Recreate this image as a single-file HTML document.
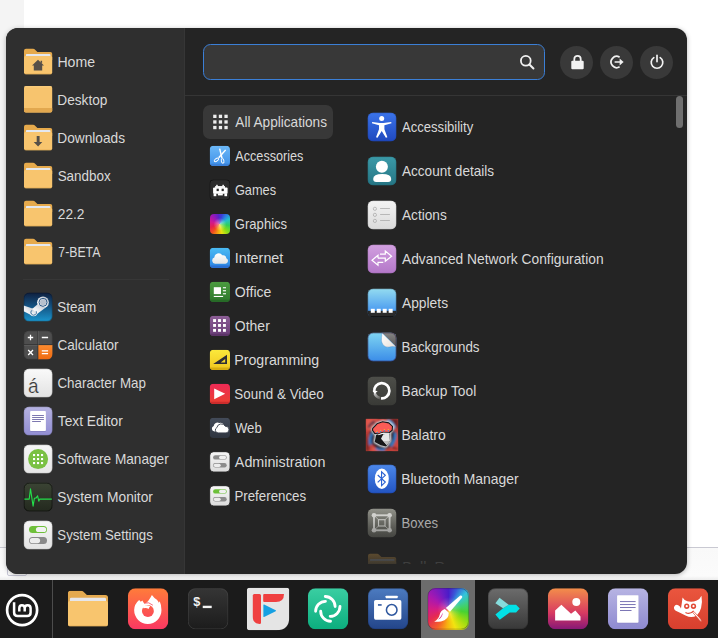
<!DOCTYPE html>
<html lang="en"><head><meta charset="utf-8"><title>Menu</title>
<style>
html,body{margin:0;padding:0}
body{width:718px;height:638px;overflow:hidden;position:relative;background:#fff;font-family:"Liberation Sans",sans-serif;font-size:14.5px}
.abs{position:absolute}
.t{position:absolute;white-space:nowrap;line-height:20px;height:20px;font-size:14.5px;transform-origin:0 50%}
#bgl{left:0;top:0;width:24px;height:548px;background:#f4f4f4}
#bgb{left:0;top:547px;width:718px;height:33px;background:linear-gradient(to bottom,#f9f9f9 0,#fbfbfb 28px,#ececec 32px,#dcdcdc 33px);border-top:1px solid #c9c9d2;box-sizing:border-box}
#box{left:7px;top:541px;width:20px;height:35px;border:1px solid #c9c9d8;border-radius:2px;box-sizing:border-box;background:#fdfdfd}
#menu{left:6px;top:28px;width:681px;height:546px;border-radius:12px;background:#242424;overflow:hidden;box-shadow:0 1px 5px rgba(0,0,0,.28)}
#side{left:0;top:0;width:179px;height:546px;background:#2f2f2f;box-sizing:border-box;border-right:1px solid #363636}
#sep1{left:17px;top:251px;width:146px;height:1px;background:#373737}
#sep2{left:179px;top:67px;width:502px;height:1px;background:#353535}
#search{left:197px;top:16px;width:342px;height:36px;box-sizing:border-box;border:1px solid #3b7fd6;border-radius:7.5px;background:#383838}
.rb{width:33px;height:33px;border-radius:50%;background:#393939;top:17.5px}
#scroll{left:669.5px;top:68px;width:7px;height:32px;border-radius:4px;background:#6f6f6f}
#sel{left:197px;top:77px;width:130px;height:34px;border-radius:7px;background:#383838}
#fade{left:336px;top:504px;width:338px;height:70px;background:linear-gradient(to bottom,rgba(36,36,36,0) 0,rgba(36,36,36,.26) 27%,rgba(36,36,36,.78) 77%,rgba(36,36,36,.93) 90%,rgba(36,36,36,.96) 100%)}
#panel{left:0;top:580px;width:718px;height:58px;background:#1b1b1b}
#pact{left:421px;top:580px;width:54px;height:58px;background:#6c6c6c}
#psep{left:52px;top:580px;width:1px;height:58px;background:#4c4c4c}
#rainbow{left:427.5px;top:588.2px;width:41.4px;height:41.4px;border-radius:7.8px;background:radial-gradient(circle at 52% 50%,rgba(255,240,200,.35) 0,rgba(255,240,200,0) 40%),conic-gradient(from 0deg at 50% 50%,#4a1cc8 0deg,#3a58d8 22deg,#34c4dc 48deg,#3fd07a 75deg,#48d232 100deg,#9adc12 128deg,#f2e410 160deg,#f8b010 185deg,#f4602a 212deg,#e62a52 240deg,#d41c86 270deg,#a818b0 305deg,#6a1cc4 340deg,#4a1cc8 360deg)}
#layer{left:0;top:0;width:718px;height:638px}
</style></head><body>
<div class="abs" id="bgl"></div>
<div class="abs" id="bgb"></div>
<div class="abs" id="box"></div>
<div class="abs" id="menu">
  <div class="abs" id="side"></div>
  <div class="abs" id="sep1"></div>
  <div class="abs" id="sep2"></div>
  <div class="abs" id="search"></div>
  <svg class="abs" style="left:513px;top:25.5px" width="17" height="17" viewBox="0 0 16 16"><circle cx="6.4" cy="6.4" r="4.6" fill="none" stroke="#f0f0f0" stroke-width="1.7"/><path d="M9.8 9.8 L13.6 13.6" stroke="#f0f0f0" stroke-width="1.9" stroke-linecap="round"/></svg>
  <div class="abs rb" style="left:554px"></div>
  <div class="abs rb" style="left:594px"></div>
  <div class="abs rb" style="left:634px"></div>
  <svg class="abs" style="left:562.5px;top:25.5px" width="17" height="17" viewBox="0 0 17 17"><path d="M5.3 7.4 V5 A3.2 3.2 0 0 1 11.7 5 V7.4" fill="none" stroke="#f2f2f2" stroke-width="1.8"/><rect x="2.3" y="6.7" width="12.4" height="8.6" rx="1.1" fill="#f2f2f2"/></svg>
  <svg class="abs" style="left:603px;top:26px" width="16" height="16" viewBox="0 0 16 16"><path d="M10.6 3.2 A5.6 5.6 0 1 0 10.6 12.8" fill="none" stroke="#f2f2f2" stroke-width="1.7"/><path d="M5.6 8 H12" stroke="#f2f2f2" stroke-width="1.7"/><path d="M10.6 4.6 L14.6 8 L10.6 11.4 Z" fill="#f2f2f2"/></svg>
  <svg class="abs" style="left:643px;top:26px" width="16" height="16" viewBox="0 0 16 16"><path d="M4.8 3.6 A5.8 5.8 0 1 0 11.2 3.6" fill="none" stroke="#f2f2f2" stroke-width="1.7" stroke-linecap="round"/><path d="M8 1.4 V7.6" stroke="#f2f2f2" stroke-width="1.7" stroke-linecap="round"/></svg>
  <div class="abs" id="scroll"></div>
  <div class="abs" id="sel"></div>
</div>
<svg class="abs" style="left:0;top:0" width="718" height="638" viewBox="0 0 718 638">
<defs><clipPath id="cpapps"><rect x="336" y="97" width="340" height="467"/></clipPath></defs>
<svg x="24" y="48" opacity="1.0" width="29" height="29" viewBox="0 0 29 29"><path d="M0 2.8 Q0 0.8 2 0.8 H9.3 Q10 0.8 10.6 1.3 L13.4 3.9 H26.3 Q28.2 3.9 28.2 5.8 V12 H0 Z" fill="#e6aa4c"/><rect x="1.9" y="5.9" width="24.6" height="4" rx="1" fill="#e4e8ef"/><path d="M0 9.6 Q0 8 1.6 8 H26.6 Q28.2 8 28.2 9.6 V24.5 Q28.2 26.3 26.4 26.3 H1.8 Q0 26.3 0 24.5 Z" fill="#f8c56e"/><rect x="0.6" y="25.5" width="27" height="0.8" rx="0.4" fill="#e3a94f" opacity="0.7"/><path d="M14 11.8 L20 17.6 H18.2 V22.4 H9.8 V17.6 H8 Z M16.6 12.8 h1.5 v2.6 l-1.5 -1.4 Z" fill="#554f48"/></svg>
<svg x="24" y="84" opacity="1.0" width="29" height="30" viewBox="0 0 29 30"><rect x="0" y="2.1" width="28.2" height="26.5" rx="1.8" fill="#f7c46e"/><path d="M0 23.9 H28.2 V26.8 Q28.2 28.6 26.4 28.6 H1.8 Q0 28.6 0 26.8 Z" fill="#e2a84f"/><rect x="0.3" y="2.4" width="27.6" height="0.9" rx="0.5" fill="#fbd68c" opacity="0.8"/></svg>
<svg x="24" y="124" opacity="1.0" width="29" height="29" viewBox="0 0 29 29"><path d="M0 2.8 Q0 0.8 2 0.8 H9.3 Q10 0.8 10.6 1.3 L13.4 3.9 H26.3 Q28.2 3.9 28.2 5.8 V12 H0 Z" fill="#e6aa4c"/><rect x="1.9" y="5.9" width="24.6" height="4" rx="1" fill="#e4e8ef"/><path d="M0 9.6 Q0 8 1.6 8 H26.6 Q28.2 8 28.2 9.6 V24.5 Q28.2 26.3 26.4 26.3 H1.8 Q0 26.3 0 24.5 Z" fill="#f8c56e"/><rect x="0.6" y="25.5" width="27" height="0.8" rx="0.4" fill="#e3a94f" opacity="0.7"/><path d="M12.7 12 h2.9 v6 h2.7 L14.1 22.5 L9.7 18 h3 Z" fill="#554f48"/></svg>
<svg x="24" y="162" opacity="1.0" width="29" height="29" viewBox="0 0 29 29"><path d="M0 2.8 Q0 0.8 2 0.8 H9.3 Q10 0.8 10.6 1.3 L13.4 3.9 H26.3 Q28.2 3.9 28.2 5.8 V12 H0 Z" fill="#e6aa4c"/><rect x="1.9" y="5.9" width="24.6" height="4" rx="1" fill="#e4e8ef"/><path d="M0 9.6 Q0 8 1.6 8 H26.6 Q28.2 8 28.2 9.6 V24.5 Q28.2 26.3 26.4 26.3 H1.8 Q0 26.3 0 24.5 Z" fill="#f8c56e"/><rect x="0.6" y="25.5" width="27" height="0.8" rx="0.4" fill="#e3a94f" opacity="0.7"/></svg>
<svg x="24" y="200" opacity="1.0" width="29" height="29" viewBox="0 0 29 29"><path d="M0 2.8 Q0 0.8 2 0.8 H9.3 Q10 0.8 10.6 1.3 L13.4 3.9 H26.3 Q28.2 3.9 28.2 5.8 V12 H0 Z" fill="#e6aa4c"/><rect x="1.9" y="5.9" width="24.6" height="4" rx="1" fill="#e4e8ef"/><path d="M0 9.6 Q0 8 1.6 8 H26.6 Q28.2 8 28.2 9.6 V24.5 Q28.2 26.3 26.4 26.3 H1.8 Q0 26.3 0 24.5 Z" fill="#f8c56e"/><rect x="0.6" y="25.5" width="27" height="0.8" rx="0.4" fill="#e3a94f" opacity="0.7"/></svg>
<svg x="24" y="238" opacity="1.0" width="29" height="29" viewBox="0 0 29 29"><path d="M0 2.8 Q0 0.8 2 0.8 H9.3 Q10 0.8 10.6 1.3 L13.4 3.9 H26.3 Q28.2 3.9 28.2 5.8 V12 H0 Z" fill="#e6aa4c"/><rect x="1.9" y="5.9" width="24.6" height="4" rx="1" fill="#e4e8ef"/><path d="M0 9.6 Q0 8 1.6 8 H26.6 Q28.2 8 28.2 9.6 V24.5 Q28.2 26.3 26.4 26.3 H1.8 Q0 26.3 0 24.5 Z" fill="#f8c56e"/><rect x="0.6" y="25.5" width="27" height="0.8" rx="0.4" fill="#e3a94f" opacity="0.7"/></svg>
<svg x="23.6" y="292.6" width="29" height="29" viewBox="0 0 29 29"><defs><linearGradient id="gst" x1="0" y1="0" x2="0" y2="1"><stop offset="0" stop-color="#0f1f3e"/><stop offset="0.45" stop-color="#14507f"/><stop offset="1" stop-color="#1b96ce"/></linearGradient><linearGradient id="gst2" x1="1" y1="0" x2="0" y2="1"><stop offset="0" stop-color="#b4bcc8"/><stop offset="0.6" stop-color="#eef0f3"/><stop offset="1" stop-color="#ffffff"/></linearGradient><clipPath id="cst"><rect x="0" y="0" width="29" height="29" rx="5.8"/></clipPath></defs><rect x="0" y="0" width="29" height="29" rx="5.8" fill="url(#gst)"/><rect x="0.4" y="0.4" width="28.2" height="28.2" rx="5.3999999999999995" fill="none" stroke="#000" stroke-width="0.8" opacity="0.3"/><g fill="url(#gst2)" clip-path="url(#cst)"><circle cx="19.4" cy="9.7" r="5.9"/><circle cx="10" cy="19.8" r="3.8"/><path d="M0 13.0 L10.4 16.4 L7.4 22.4 L0 18.7 Z"/><path d="M14 11.6 L8.6 16.4 L13.4 21.4 L22.2 15 Z"/></g><circle cx="19.4" cy="9.7" r="4" fill="none" stroke="#1a4a7a" stroke-width="0.9"/><circle cx="19.4" cy="9.7" r="3" fill="#b7c0cd"/><path d="M12.6 18.6 A2.8 2.8 0 1 1 8.2 17.7" fill="none" stroke="#1b5b8f" stroke-width="0.8"/></svg>
<svg x="23.6" y="330.6" width="29" height="29" viewBox="0 0 29 29"><defs><linearGradient id="gca" x1="0" y1="0" x2="0" y2="1"><stop offset="0" stop-color="#fb8b30"/><stop offset="1" stop-color="#ee680e"/></linearGradient><clipPath id="cca"><rect x="0" y="0" width="29" height="29" rx="5.8"/></clipPath></defs><rect x="0" y="0" width="29" height="29" rx="5.8" fill="#4e4e4e"/><rect x="0.4" y="0.4" width="28.2" height="28.2" rx="5.3999999999999995" fill="none" stroke="#262626" stroke-width="0.8" opacity="0.3"/><g clip-path="url(#cca)"><rect x="14.4" y="14.4" width="15" height="15" fill="url(#gca)"/><rect x="0" y="13.7" width="29" height="0.8" fill="#303030"/><rect x="13.9" y="0" width="0.8" height="29" fill="#303030"/><rect x="14.7" y="0" width="0.5" height="14" fill="#6a6a6a"/><rect x="0" y="14.5" width="14" height="0.5" fill="#6a6a6a"/></g><g stroke="#fff" stroke-width="1.3" stroke-linecap="butt"><path d="M4.2 6.9 H9.6 M6.9 4.2 V9.6"/><path d="M18.2 6.9 H24.5"/><path d="M4.6 19.4 L9.4 24.4 M9.4 19.4 L4.6 24.4"/><path d="M18.2 20.2 H24.5 M18.2 23 H24.5"/></g></svg>
<svg x="23.6" y="368.6" width="29" height="29" viewBox="0 0 29 29"><defs><linearGradient id="gcm" x1="0" y1="0" x2="0" y2="1"><stop offset="0" stop-color="#fafafa"/><stop offset="1" stop-color="#e2e2e2"/></linearGradient></defs><rect x="0" y="0" width="29" height="29" rx="5.8" fill="url(#gcm)"/><rect x="0.3" y="0.3" width="28.4" height="28.4" rx="5.5" fill="none" stroke="#2a2a2a" stroke-width="0.6" opacity="0.3"/><text x="4.3" y="24.2" font-family="Liberation Sans, sans-serif" font-size="21" fill="#3b3b3b" stroke="#ececec" stroke-width="0.2" textLength="10.6" lengthAdjust="spacingAndGlyphs">á</text></svg>
<svg x="23.6" y="406.6" width="29" height="29" viewBox="0 0 29 29"><defs><linearGradient id="gte" x1="0" y1="0" x2="0" y2="1"><stop offset="0" stop-color="#b6b3e2"/><stop offset="1" stop-color="#918dd2"/></linearGradient></defs><rect x="0" y="0" width="29" height="29" rx="5.8" fill="url(#gte)"/><rect x="0.3" y="0.3" width="28.4" height="28.4" rx="5.5" fill="none" stroke="#2c2b3a" stroke-width="0.6" opacity="0.3"/><rect x="6.5" y="5" width="15.8" height="20.2" rx="0.8" fill="#6f69a8" opacity="0.5"/><rect x="6.5" y="4.5" width="15.8" height="20" rx="0.8" fill="#fff"/><g fill="#6f69a8"><rect x="8.5" y="8.4" width="11.8" height="0.9"/><rect x="8.5" y="10.5" width="11.8" height="0.9"/><rect x="8.5" y="12.5" width="11.8" height="0.9"/><rect x="8.5" y="14.5" width="8.8" height="0.9"/></g></svg>
<svg x="23.6" y="444.6" width="29" height="29" viewBox="0 0 29 29"><defs><linearGradient id="gsm" x1="0" y1="0" x2="0" y2="1"><stop offset="0" stop-color="#f6f6f6"/><stop offset="1" stop-color="#e6e6e6"/></linearGradient></defs><rect x="0" y="0" width="29" height="29" rx="5.8" fill="url(#gsm)"/><rect x="0.3" y="0.3" width="28.4" height="28.4" rx="5.5" fill="none" stroke="#2a2a2a" stroke-width="0.6" opacity="0.3"/><circle cx="14.5" cy="14.5" r="10" fill="#7ac143"/><rect x="9.4" y="9.4" width="2.1" height="2.1" fill="#fff"/><rect x="9.4" y="13.4" width="2.1" height="2.1" fill="#fff"/><rect x="9.4" y="17.4" width="2.1" height="2.1" fill="#fff"/><rect x="13.4" y="9.4" width="2.1" height="2.1" fill="#fff"/><rect x="13.4" y="13.4" width="2.1" height="2.1" fill="#fff"/><rect x="13.4" y="17.4" width="2.1" height="2.1" fill="#fff"/><rect x="17.4" y="9.4" width="2.1" height="2.1" fill="#fff"/><rect x="17.4" y="13.4" width="2.1" height="2.1" fill="#fff"/><rect x="17.4" y="17.4" width="2.1" height="2.1" fill="#fff"/></svg>
<svg x="23.6" y="482.6" width="29" height="29" viewBox="0 0 29 29"><defs><linearGradient id="gmo" x1="0" y1="0" x2="0" y2="1"><stop offset="0" stop-color="#3b4434"/><stop offset="1" stop-color="#23291e"/></linearGradient></defs><rect x="0" y="0" width="29" height="29" rx="5.8" fill="url(#gmo)"/><rect x="0.45" y="0.45" width="28.1" height="28.1" rx="5.4" fill="none" stroke="#0a0a0a" stroke-width="0.9" opacity="0.85"/><path d="M0.8 16.5 H5.6 L6.9 6.2 L9.5 23.5 L10.8 15.6 L12.6 15.3 L14 13.2 L15.2 18.6 L16 16.5 H28.2" fill="none" stroke="#23e04a" stroke-width="1.1" stroke-linejoin="round"/></svg>
<svg x="23.6" y="520.6" width="29" height="29" viewBox="0 0 29 29"><defs><linearGradient id="gss" x1="0" y1="0" x2="0" y2="1"><stop offset="0" stop-color="#f7f7f7"/><stop offset="1" stop-color="#e3e3e3"/></linearGradient></defs><rect x="0" y="0" width="29" height="29" rx="5.8" fill="url(#gss)"/><rect x="0.3" y="0.3" width="28.4" height="28.4" rx="5.5" fill="none" stroke="#2a2a2a" stroke-width="0.6" opacity="0.3"/><rect x="5.4" y="5.4" width="18" height="7" rx="3.5" fill="#6fc03a"/><rect x="12.3" y="6.3" width="10.3" height="5.2" rx="2.6" fill="#f2f2f2"/><rect x="5.4" y="16.5" width="18" height="7" rx="3.5" fill="#8a8a8a"/><rect x="6.2" y="17.4" width="10.3" height="5.2" rx="2.6" fill="#ececec"/></svg>
<g><rect x="213.2" y="114.7" width="3.3" height="3.3" fill="#ededed"/><rect x="213.2" y="120.3" width="3.3" height="3.3" fill="#ededed"/><rect x="213.2" y="125.9" width="3.3" height="3.3" fill="#ededed"/><rect x="218.8" y="114.7" width="3.3" height="3.3" fill="#ededed"/><rect x="218.8" y="120.3" width="3.3" height="3.3" fill="#ededed"/><rect x="218.8" y="125.9" width="3.3" height="3.3" fill="#ededed"/><rect x="224.4" y="114.7" width="3.3" height="3.3" fill="#ededed"/><rect x="224.4" y="120.3" width="3.3" height="3.3" fill="#ededed"/><rect x="224.4" y="125.9" width="3.3" height="3.3" fill="#ededed"/></g>
<svg x="209.7" y="145.7" width="20.3" height="20.3" viewBox="0 0 20.3 20.3"><defs><linearGradient id="gac" x1="0" y1="0" x2="0" y2="1"><stop offset="0" stop-color="#6cb9f8"/><stop offset="1" stop-color="#3e8fe8"/></linearGradient></defs><rect x="0" y="0" width="20.3" height="20.3" rx="4" fill="url(#gac)"/><path d="M0 18.1 H20.3 V16.3 Q20.3 20.3 16.3 20.3 H4 Q0 20.3 0 16.3 Z" fill="#3a80d8" opacity="1"/><path d="M9.3 3 L10.6 2.9 L13 12.2 L11.6 12.8 Z" fill="#fff"/><path d="M15.4 3.8 L16.5 4.6 L9.6 12.6 L8.4 11.6 Z" fill="#fff"/><g fill="none" stroke="#fff" stroke-width="0.95"><ellipse cx="12.9" cy="15.2" rx="1.3" ry="2.3" transform="rotate(-12 12.9 15.2)"/><ellipse cx="6.7" cy="14.2" rx="1.3" ry="2.5" transform="rotate(55 6.7 14.2)"/></g></svg>
<svg x="209.7" y="179.7" width="20.3" height="20.3" viewBox="0 0 20.3 20.3"><rect x="0" y="0" width="20.3" height="20.3" rx="4" fill="#2b2b2b" stroke="#111" stroke-width="0.9"/><g fill="#fff"><rect x="6.5" y="5.1" width="1.5" height="1.6"/><rect x="12.7" y="5.1" width="1.5" height="1.6"/><rect x="5.4" y="6.4" width="9.9" height="1.8"/><rect x="3.4" y="7.8" width="14.5" height="6.3" rx="1"/><rect x="3.9" y="13.6" width="2.7" height="2.9"/><rect x="8.2" y="13.6" width="4.9" height="2.1"/><rect x="14.7" y="13.6" width="2.7" height="2.9"/></g><rect x="6.9" y="9" width="2.2" height="2.4" fill="#2b2b2b"/><rect x="11.9" y="9" width="2.2" height="2.4" fill="#2b2b2b"/></svg>
<svg x="209.7" y="247.7" width="20.3" height="20.3" viewBox="0 0 20.3 20.3"><defs><linearGradient id="gin" x1="0" y1="0" x2="0" y2="1"><stop offset="0" stop-color="#4bbcf4"/><stop offset="1" stop-color="#2c82e2"/></linearGradient><linearGradient id="gin2" x1="0" y1="0" x2="0" y2="1"><stop offset="0" stop-color="#ffffff"/><stop offset="1" stop-color="#e4e4e4"/></linearGradient></defs><rect x="0" y="0" width="20.3" height="20.3" rx="4" fill="url(#gin)"/><path d="M0 17.900000000000002 H20.3 V16.3 Q20.3 20.3 16.3 20.3 H4 Q0 20.3 0 16.3 Z" fill="#2a6fd2" opacity="1"/><path d="M5.4 16.1 A3.2 3.2 0 0 1 4.6 9.9 A4.4 4.4 0 0 1 12.6 7.5 A3.5 3.5 0 0 1 16.6 10.6 A2.9 2.9 0 0 1 15.8 16.1 Z" fill="url(#gin2)"/></svg>
<svg x="209.7" y="281.7" width="20.3" height="20.3" viewBox="0 0 20.3 20.3"><defs><linearGradient id="gof" x1="0" y1="0" x2="0" y2="1"><stop offset="0" stop-color="#4c9c40"/><stop offset="1" stop-color="#2c772b"/></linearGradient></defs><rect x="0" y="0" width="20.3" height="20.3" rx="4" fill="url(#gof)"/><path d="M0 18.1 H20.3 V16.3 Q20.3 20.3 16.3 20.3 H4 Q0 20.3 0 16.3 Z" fill="#276a27" opacity="1"/><g fill="#fff"><rect x="4.1" y="5.5" width="7.2" height="6.9"/><rect x="13.2" y="5.5" width="3.1" height="1.1"/><rect x="13.2" y="8.5" width="3.1" height="1.1"/><rect x="13.2" y="11.5" width="3.1" height="1.1"/><rect x="4.1" y="14.2" width="9.3" height="1.1"/></g></svg>
<svg x="209.7" y="315.7" width="20.3" height="20.3" viewBox="0 0 20.3 20.3"><defs><linearGradient id="got" x1="0" y1="0" x2="0" y2="1"><stop offset="0" stop-color="#8c5e96"/><stop offset="1" stop-color="#693d77"/></linearGradient></defs><rect x="0" y="0" width="20.3" height="20.3" rx="4" fill="url(#got)"/><path d="M0 18.1 H20.3 V16.3 Q20.3 20.3 16.3 20.3 H4 Q0 20.3 0 16.3 Z" fill="#5c3468" opacity="1"/><rect x="3.40" y="3.40" width="2.9" height="2.9" fill="#fff"/><rect x="3.40" y="8.30" width="2.9" height="2.9" fill="#fff"/><rect x="3.40" y="13.20" width="2.9" height="2.9" fill="#fff"/><rect x="8.35" y="3.40" width="2.9" height="2.9" fill="#fff"/><rect x="8.35" y="8.30" width="2.9" height="2.9" fill="#fff"/><rect x="8.35" y="13.20" width="2.9" height="2.9" fill="#fff"/><rect x="13.30" y="3.40" width="2.9" height="2.9" fill="#fff"/><rect x="13.30" y="8.30" width="2.9" height="2.9" fill="#fff"/><rect x="13.30" y="13.20" width="2.9" height="2.9" fill="#fff"/></svg>
<svg x="209.7" y="349.7" width="20.3" height="20.3" viewBox="0 0 20.3 20.3"><defs><linearGradient id="gpr" x1="0" y1="0" x2="0" y2="1"><stop offset="0" stop-color="#fbe93c"/><stop offset="1" stop-color="#f0c61e"/></linearGradient></defs><rect x="0" y="0" width="20.3" height="20.3" rx="4" fill="url(#gpr)"/><path d="M0 17.900000000000002 H20.3 V16.3 Q20.3 20.3 16.3 20.3 H4 Q0 20.3 0 16.3 Z" fill="#d6ac10" opacity="1"/><path d="M17.3 5 V14.3 H3.5 Z M15.5 9.4 L11 12.9 H15.5 Z" fill="#2e2e36" fill-rule="evenodd"/></svg>
<svg x="209.7" y="383.7" width="20.3" height="20.3" viewBox="0 0 20.3 20.3"><defs><linearGradient id="gsv" x1="0" y1="0" x2="0" y2="1"><stop offset="0" stop-color="#ee2a56"/><stop offset="1" stop-color="#ea4030"/></linearGradient></defs><rect x="0" y="0" width="20.3" height="20.3" rx="4" fill="url(#gsv)"/><path d="M0 18.1 H20.3 V16.3 Q20.3 20.3 16.3 20.3 H4 Q0 20.3 0 16.3 Z" fill="#cc2c2c" opacity="1"/><path d="M4.5 4.8 L15.5 10.1 L4.5 15.5 Z" fill="#fff"/></svg>
<svg x="209.7" y="417.7" width="20.3" height="20.3" viewBox="0 0 20.3 20.3"><defs><linearGradient id="gwe" x1="0" y1="0" x2="0" y2="1"><stop offset="0" stop-color="#434b59"/><stop offset="1" stop-color="#2f3540"/></linearGradient></defs><rect x="0" y="0" width="20.3" height="20.3" rx="4" fill="url(#gwe)"/><path d="M4.8 13.8 A2.9 2.9 0 0 1 4 8.2 A3.7 3.7 0 0 1 9.6 5.4 A3.8 3.8 0 0 1 14.6 8 L8 13.8 Z" fill="#fff"/><path d="M8.4 15.2 A2.8 2.8 0 0 1 7.2 9.9 A4.5 4.5 0 0 1 15.6 8.6 A3.3 3.3 0 0 1 16.4 15.2 Z" fill="#fff" stroke="#39404c" stroke-width="0.9"/></svg>
<svg x="209.7" y="451.7" width="20.3" height="20.3" viewBox="0 0 20.3 20.3"><defs><linearGradient id="gtg0" x1="0" y1="0" x2="0" y2="1"><stop offset="0" stop-color="#f7f7f7"/><stop offset="1" stop-color="#dcdcdc"/></linearGradient></defs><rect x="0" y="0" width="20.3" height="20.3" rx="4" fill="url(#gtg0)" stroke="#161616" stroke-width="0.8"/><rect x="3.4" y="3.5" width="13.6" height="4.4" rx="2.2" fill="#8c8c8c"/><rect x="9.4" y="4.1" width="7" height="3.2" rx="1.6" fill="#f0f0f0"/><rect x="3.4" y="11.4" width="13.6" height="4.4" rx="2.2" fill="#8c8c8c"/><rect x="4" y="12" width="7" height="3.2" rx="1.6" fill="#ececec"/></svg>
<svg x="209.7" y="485.7" width="20.3" height="20.3" viewBox="0 0 20.3 20.3"><defs><linearGradient id="gtg1" x1="0" y1="0" x2="0" y2="1"><stop offset="0" stop-color="#f7f7f7"/><stop offset="1" stop-color="#dcdcdc"/></linearGradient></defs><rect x="0" y="0" width="20.3" height="20.3" rx="4" fill="url(#gtg1)" stroke="#161616" stroke-width="0.8"/><rect x="3.4" y="3.5" width="13.6" height="4.4" rx="2.2" fill="#6cc03a"/><rect x="9.4" y="4.1" width="7" height="3.2" rx="1.6" fill="#f0f0f0"/><rect x="3.4" y="11.4" width="13.6" height="4.4" rx="2.2" fill="#8c8c8c"/><rect x="4" y="12" width="7" height="3.2" rx="1.6" fill="#ececec"/></svg>
<g clip-path="url(#cpapps)">
<svg x="367.5" y="112.5" width="29" height="29" viewBox="0 0 29 29"><defs><linearGradient id="ga1" x1="0" y1="0" x2="0" y2="1"><stop offset="0" stop-color="#3b74ea"/><stop offset="1" stop-color="#1f48be"/></linearGradient></defs><rect x="0" y="0" width="29" height="29" rx="5.8" fill="url(#ga1)"/><rect x="0.35" y="0.35" width="28.3" height="28.3" rx="5.45" fill="none" stroke="#16307a" stroke-width="0.7" opacity="0.3"/><g fill="#fff"><circle cx="14.2" cy="6.1" r="2.5"/><path d="M4.7 9.4 L12.3 10.5 H16.1 L23.7 9.4 L24 10.8 L16.9 12.7 V16.8 L19.9 24.7 L18.4 25.3 L14.2 18.4 L10 25.3 L8.5 24.7 L11.5 16.8 V12.7 L4.4 10.8 Z"/></g></svg>
<svg x="367.5" y="156.5" width="29" height="29" viewBox="0 0 29 29"><defs><linearGradient id="ga2" x1="0" y1="0" x2="0" y2="1"><stop offset="0" stop-color="#3b9aa8"/><stop offset="1" stop-color="#257584"/></linearGradient></defs><rect x="0" y="0" width="29" height="29" rx="5.8" fill="url(#ga2)"/><rect x="0.35" y="0.35" width="28.3" height="28.3" rx="5.45" fill="none" stroke="#174650" stroke-width="0.7" opacity="0.3"/><g fill="#fff"><circle cx="14.4" cy="10.2" r="6"/><path d="M5.7 22.6 Q5.7 17.6 14.7 17.6 Q23.7 17.6 23.7 22.6 Q23.7 25.5 20.7 25.5 H8.7 Q5.7 25.5 5.7 22.6 Z"/></g></svg>
<svg x="367.5" y="200.5" width="29" height="29" viewBox="0 0 29 29"><defs><linearGradient id="ga3" x1="0" y1="0" x2="0" y2="1"><stop offset="0" stop-color="#f4f4f4"/><stop offset="1" stop-color="#dadada"/></linearGradient></defs><rect x="0" y="0" width="29" height="29" rx="5.8" fill="url(#ga3)"/><rect x="0.25" y="0.25" width="28.5" height="28.5" rx="5.55" fill="none" stroke="#3a3a3a" stroke-width="0.5" opacity="0.3"/><circle cx="7.4" cy="8.30" r="1.6" fill="none" stroke="#9c9c9c" stroke-width="0.6"/><rect x="12.6" y="7.70" width="9.8" height="0.7" fill="#a4a4a4"/><circle cx="7.4" cy="14.35" r="1.6" fill="none" stroke="#9c9c9c" stroke-width="0.6"/><rect x="12.6" y="13.70" width="9.8" height="0.7" fill="#a4a4a4"/><circle cx="7.4" cy="20.40" r="1.6" fill="none" stroke="#9c9c9c" stroke-width="0.6"/><rect x="12.6" y="19.70" width="9.8" height="0.7" fill="#a4a4a4"/></svg>
<svg x="367.5" y="244.5" width="29" height="29" viewBox="0 0 29 29"><defs><linearGradient id="ga4" x1="0" y1="0" x2="0" y2="1"><stop offset="0" stop-color="#d2a0e0"/><stop offset="1" stop-color="#b377c8"/></linearGradient></defs><rect x="0" y="0" width="29" height="29" rx="5.8" fill="url(#ga4)"/><rect x="0.3" y="0.3" width="28.4" height="28.4" rx="5.5" fill="none" stroke="#5a3468" stroke-width="0.6" opacity="0.3"/><g fill="none" stroke="#fff" stroke-width="1.2" stroke-linejoin="miter"><path d="M12.5 9.7 H17.8 V6.6 L24.1 11.7 L17.8 16.8 V13.7 H10.5"/><path d="M15.8 17.8 H10.5 V20.8 L4.5 15.7 L10.5 10.7 V13.7"/></g></svg>
<svg x="367.5" y="288.5" width="29" height="29" viewBox="0 0 29 29"><defs><linearGradient id="ga5" x1="0" y1="0" x2="0" y2="1"><stop offset="0" stop-color="#94dcf0"/><stop offset="0.76" stop-color="#4c9cf0"/><stop offset="1" stop-color="#4c9cf0"/></linearGradient><clipPath id="ca5"><rect x="0" y="0" width="29" height="29" rx="5.8"/></clipPath></defs><g clip-path="url(#ca5)"><rect x="0" y="0" width="29" height="29" fill="url(#ga5)"/><rect x="0" y="22.3" width="29" height="8" fill="#2b2b2b"/><rect x="0" y="27.6" width="29" height="2" fill="#161616"/><rect x="3.30" y="20.3" width="4" height="4" fill="#fff"/><rect x="9.25" y="20.3" width="4" height="4" fill="#fff"/><rect x="15.20" y="20.3" width="4" height="4" fill="#fff"/><rect x="21.15" y="20.3" width="4" height="4" fill="#fff"/></g><rect x="0.3" y="0.3" width="28.4" height="28.4" rx="5.5" fill="none" stroke="#15151c" stroke-width="0.6" opacity="0.5"/></svg>
<svg x="367.5" y="332.5" width="29" height="29" viewBox="0 0 29 29"><defs><linearGradient id="ga6" x1="0" y1="0" x2="0" y2="1"><stop offset="0" stop-color="#80d6f2"/><stop offset="1" stop-color="#3a8ce8"/></linearGradient><linearGradient id="ga6b" x1="0" y1="0" x2="1" y2="1"><stop offset="0" stop-color="#ffffff"/><stop offset="1" stop-color="#e6e0d8"/></linearGradient><linearGradient id="ga6c" x1="0" y1="0" x2="0" y2="1"><stop offset="0" stop-color="#868686"/><stop offset="1" stop-color="#565656"/></linearGradient><clipPath id="ca6"><rect x="0" y="0" width="29" height="29" rx="5.8"/></clipPath></defs><g clip-path="url(#ca6)"><rect x="0" y="0" width="29" height="29" fill="url(#ga6)"/><path d="M14.3 0 H29 V14.6 Z" fill="url(#ga6c)"/><path d="M14.3 0.2 L28.8 14.4 Q24.5 13.4 21.5 14.6 Q17.3 15.2 15 11.6 Q13.4 8.6 14 5 Q14.5 2.5 14.3 0.2 Z" fill="url(#ga6b)" stroke="#3a78c0" stroke-width="0.3"/></g><rect x="0.35" y="0.35" width="28.3" height="28.3" rx="5.5" fill="none" stroke="#2a0a38" stroke-width="0.7" opacity="0.8"/></svg>
<svg x="367.5" y="376.5" width="29" height="29" viewBox="0 0 29 29"><defs><linearGradient id="ga7" x1="0" y1="0" x2="0" y2="1"><stop offset="0" stop-color="#4d4e49"/><stop offset="1" stop-color="#393a36"/></linearGradient><linearGradient id="ga7b" x1="0" y1="0" x2="1" y2="1"><stop offset="0" stop-color="#c8c8c8"/><stop offset="1" stop-color="#5c5c58"/></linearGradient></defs><rect x="0" y="0" width="29" height="29" rx="5.8" fill="url(#ga7)"/><path d="M7.16 16.80 A7.6 7.6 0 0 0 12.98 21.68" fill="none" stroke="url(#ga7b)" stroke-width="2.6"/><path d="M13.51 21.76 A7.6 7.6 0 1 0 6.77 15.26" fill="none" stroke="#fff" stroke-width="2.7"/><path d="M5.0 14.2 L10.2 14.6 L7.2 17.6 Z" fill="#fff"/></svg>
<svg x="365.7" y="418.7" width="32.6" height="32.6" viewBox="0 0 32.6 32.6"><defs><filter id="fa8" x="-20%" y="-20%" width="140%" height="140%"><feGaussianBlur stdDeviation="1.3"/></filter><filter id="fa8b" x="-20%" y="-20%" width="140%" height="140%"><feGaussianBlur stdDeviation="0.8"/></filter><clipPath id="ca8"><rect x="0" y="0" width="32.6" height="32.6"/></clipPath></defs><g clip-path="url(#ca8)"><rect x="0" y="0" width="32.6" height="32.6" fill="#c0403a"/><g filter="url(#fa8)"><path d="M0 0 H13 Q7 4 6 11 Q2 13 0 9 Z" fill="#e2584e"/><path d="M19 0 H32.6 V11 Q28 4 19 0 Z" fill="#6a2020"/><path d="M0 13 Q4 22 3 32.6 H0 Z" fill="#7a2624"/><path d="M26 32.6 Q32 26 32.6 15 V32.6 Z" fill="#d04640"/><path d="M5 32.6 Q8 27 6 22 Q12 28 21 32.6 Z" fill="#de544c"/><ellipse cx="16.5" cy="17" rx="12.8" ry="13.8" fill="#2a1a26"/><path d="M21.5 1.6 Q27 3 28.6 9.6" stroke="#4aaef2" stroke-width="2.2" fill="none"/><path d="M29.6 14 Q30.2 22 25 27.4" stroke="#2a86dc" stroke-width="2.4" fill="none"/><path d="M4.8 26.4 Q3.2 20 6.2 14.6" stroke="#2a86dc" stroke-width="2.2" fill="none"/><path d="M10 29.8 Q14 32.2 19.4 31" stroke="#2a86dc" stroke-width="2" fill="none"/><path d="M2.6 9 Q4.6 4.6 9 2.6" stroke="#16324c" stroke-width="2" fill="none"/><path d="M26.4 28 Q29 30.6 32 30" stroke="#7a2220" stroke-width="2" fill="none"/></g><g filter="url(#fa8b)"><path d="M7 9.6 L11.3 5.1 L16.9 3.1 L23.1 4.2 L26.8 7.6 L26.5 11.6 L23.7 13.8 L17.5 13.5 L12.4 15.3 L9 14.7 L6.8 11.6 Z" fill="#eef4f8" stroke="#eef4f8" stroke-width="2.6" stroke-linejoin="round"/><path d="M10.4 16.2 L17 15.2 L24 14.6 L24.4 22 L21 27 L20.3 27.8 L15 26.6 L9 23.2 Z" fill="#eef4f8" stroke="#eef4f8" stroke-width="2.4" stroke-linejoin="round"/></g><path d="M10.4 16.2 L17 15.2 L24 14.6 L24.4 22 L21 27 L20.3 27.8 L15 26.6 L9 23.2 Z" fill="#18181a"/><path d="M17.6 15.6 L23.7 14.8 L24.2 22 L21 26.4 L15.3 20 Z" fill="#e6e6e6"/><path d="M17.6 22.6 L21 26.4 L24.2 22 Z" fill="#bdbdbd"/><path d="M7 9.6 L11.3 5.1 L16.9 3.1 L23.1 4.2 L26.8 7.6 L26.5 11.6 L23.7 13.8 L17.5 13.5 L12.4 15.3 L9 14.7 L6.8 11.6 Z" fill="#fb5c56" stroke="#16161a" stroke-width="1.1" stroke-linejoin="round"/><path d="M12.6 16 L17.5 14.4 L23.6 14.6" stroke="#fff" stroke-width="0.9" fill="none"/><g fill="#f6b62a"><rect x="10.4" y="12.2" width="1.2" height="1"/><rect x="14.2" y="11.2" width="1.2" height="1"/><rect x="18.1" y="10.5" width="1.2" height="1"/><rect x="22.1" y="10.5" width="1.2" height="1"/></g><g fill="#2f8ee6"><rect x="10.9" y="13.2" width="1.2" height="1.1"/><rect x="14.3" y="12.2" width="1.2" height="1.1"/><rect x="18.1" y="11.5" width="1.2" height="1.1"/><rect x="22.1" y="11.5" width="1.2" height="1.1"/></g></g></svg>
<svg x="367.5" y="464.5" width="29" height="29" viewBox="0 0 29 29"><defs><linearGradient id="ga9" x1="0" y1="0" x2="0" y2="1"><stop offset="0" stop-color="#4c88ea"/><stop offset="1" stop-color="#2254c2"/></linearGradient></defs><rect x="0" y="0" width="29" height="29" rx="5.8" fill="url(#ga9)"/><rect x="0.35" y="0.35" width="28.3" height="28.3" rx="5.45" fill="none" stroke="#0e1e60" stroke-width="0.7" opacity="0.3"/><ellipse cx="14.3" cy="14.2" rx="7" ry="10.2" fill="#fff"/><path d="M10.2 10.5 L17.8 17.6 L14.05 21.1 V7.3 L17.8 10.8 L10.2 17.8" fill="none" stroke="#2c62d2" stroke-width="1.15" stroke-linejoin="miter"/></svg>
<svg x="367.5" y="508.5" width="29" height="29" viewBox="0 0 29 29"><defs><linearGradient id="ga10" x1="0" y1="0" x2="0" y2="1"><stop offset="0" stop-color="#9a9b92"/><stop offset="1" stop-color="#62635b"/></linearGradient></defs><rect x="0" y="0" width="29" height="29" rx="5.8" fill="url(#ga10)"/><g fill="none" stroke="#f0f0ec" stroke-width="1.9"><rect x="6.5" y="6.8" width="15.6" height="15"/></g><g fill="none" stroke="#f0f0ec" stroke-width="1.1"><rect x="11" y="11.2" width="6.5" height="6.3"/></g><g fill="none" stroke="#f0f0ec" stroke-width="0.7"><path d="M6.5 6.8 L11 11.2 M22.1 6.8 L17.5 11.2 M6.5 21.8 L11 17.5 M22.1 21.8 L17.5 17.5"/></g><g fill="#f0f0ec"><circle cx="6.5" cy="6.8" r="2.3"/><circle cx="22.1" cy="6.8" r="2.3"/><circle cx="6.5" cy="21.8" r="2.3"/><circle cx="22.1" cy="21.8" r="2.3"/></g></svg>
<svg x="368" y="553" opacity="1.0" width="29" height="29" viewBox="0 0 29 29"><path d="M0 2.8 Q0 0.8 2 0.8 H9.3 Q10 0.8 10.6 1.3 L13.4 3.9 H26.3 Q28.2 3.9 28.2 5.8 V12 H0 Z" fill="#e6aa4c"/><rect x="1.9" y="5.9" width="24.6" height="4" rx="1" fill="#e4e8ef"/><path d="M0 9.6 Q0 8 1.6 8 H26.6 Q28.2 8 28.2 9.6 V24.5 Q28.2 26.3 26.4 26.3 H1.8 Q0 26.3 0 24.5 Z" fill="#f8c56e"/><rect x="0.6" y="25.5" width="27" height="0.8" rx="0.4" fill="#e3a94f" opacity="0.7"/></svg>
</g>
</svg>
<div class="abs" id="layer">
<div class="t" style="left:57px;top:51px;color:#d9d9d9;transform:translate(0.42px,0.6px) scaleX(0.974);">Home</div>
<div class="t" style="left:57px;top:89px;color:#d9d9d9;transform:translate(0.36px,0.6px) scaleX(0.941);">Desktop</div>
<div class="t" style="left:57px;top:127px;color:#d9d9d9;transform:translate(0.25px,0.6px) scaleX(0.945);">Downloads</div>
<div class="t" style="left:57px;top:165px;color:#d9d9d9;transform:translate(0.63px,0.6px) scaleX(0.929);">Sandbox</div>
<div class="t" style="left:57px;top:203px;color:#d9d9d9;transform:translate(0.75px,0.6px) scaleX(0.948);">22.2</div>
<div class="t" style="left:58px;top:241px;color:#d9d9d9;transform:translate(0.31px,0.6px) scaleX(0.847);">7-BETA</div>
<div class="t" style="left:57px;top:296px;color:#d9d9d9;transform:translate(0.33px,0.6px) scaleX(0.927);">Steam</div>
<div class="t" style="left:57px;top:334px;color:#d9d9d9;transform:translate(0.43px,0.6px) scaleX(0.935);">Calculator</div>
<div class="t" style="left:57px;top:372px;color:#d9d9d9;transform:translate(0.44px,0.6px) scaleX(0.923);">Character Map</div>
<div class="t" style="left:57px;top:410px;color:#d9d9d9;transform:translate(0.79px,0.6px) scaleX(0.949);">Text Editor</div>
<div class="t" style="left:57px;top:448px;color:#d9d9d9;transform:translate(0.32px,0.6px) scaleX(0.94);">Software Manager</div>
<div class="t" style="left:57px;top:486px;color:#d9d9d9;transform:translate(0.31px,0.6px) scaleX(0.949);">System Monitor</div>
<div class="t" style="left:57px;top:524px;color:#d9d9d9;transform:translate(0.35px,0.6px) scaleX(0.911);">System Settings</div>
<div class="t" style="left:235px;top:111px;color:#d9d9d9;transform:translate(0.36px,0.6px) scaleX(0.939);">All Applications</div>
<div class="t" style="left:235px;top:145px;color:#d9d9d9;transform:translate(0.28px,0.6px) scaleX(0.872);">Accessories</div>
<div class="t" style="left:234px;top:179px;color:#d9d9d9;transform:translate(0.89px,0.6px) scaleX(0.88);">Games</div>
<div style="position:absolute;left:209.7px;top:213.7px;width:20.3px;height:20.3px;border-radius:4px;background:radial-gradient(circle at 50% 52%,rgba(255,250,220,.55) 0,rgba(255,250,220,0) 45%),conic-gradient(from 14deg at 48% 50%,#3a3fd8 0deg,#2a8ae0 28deg,#22c2c8 50deg,#2fd05a 85deg,#86dc18 120deg,#e8e010 152deg,#f6a010 178deg,#f04a20 208deg,#e6204e 235deg,#d01890 270deg,#9a18b8 305deg,#5a22c8 338deg,#3a3fd8 360deg)"></div>
<div class="t" style="left:234px;top:213px;color:#d9d9d9;transform:translate(0.87px,0.6px) scaleX(0.9);">Graphics</div>
<div class="t" style="left:234px;top:247px;color:#d9d9d9;transform:translate(0.66px,0.6px) scaleX(0.99);">Internet</div>
<div class="t" style="left:234px;top:281px;color:#d9d9d9;transform:translate(0.85px,0.6px) scaleX(0.972);">Office</div>
<div class="t" style="left:234px;top:315px;color:#d9d9d9;transform:translate(0.86px,0.6px) scaleX(0.963);">Other</div>
<div class="t" style="left:234px;top:349px;color:#d9d9d9;transform:translate(0.31px,0.6px) scaleX(0.975);">Programming</div>
<div class="t" style="left:234px;top:383px;color:#d9d9d9;transform:translate(0.33px,0.6px) scaleX(0.927);">Sound &amp; Video</div>
<div class="t" style="left:234px;top:417px;color:#d9d9d9;transform:translate(0.89px,0.6px) scaleX(0.908);">Web</div>
<div class="t" style="left:234px;top:451px;color:#d9d9d9;transform:translate(0.85px,0.6px) scaleX(0.986);">Administration</div>
<div class="t" style="left:234px;top:485px;color:#d9d9d9;transform:translate(0.38px,0.6px) scaleX(0.918);">Preferences</div>
<div class="abs" style="left:336px;top:97px;width:340px;height:467px;overflow:hidden"><div class="abs" style="left:-336px;top:-97px;width:718px;height:638px">
<div class="t" style="left:401px;top:116px;color:#d9d9d9;transform:translate(0.97px,0.6px) scaleX(0.902);">Accessibility</div>
<div class="t" style="left:401px;top:160px;color:#d9d9d9;transform:translate(0.96px,0.6px) scaleX(0.937);">Account details</div>
<div class="t" style="left:401px;top:204px;color:#d9d9d9;transform:translate(0.96px,0.6px) scaleX(0.942);">Actions</div>
<div class="t" style="left:401px;top:248px;color:#d9d9d9;transform:translate(0.96px,0.6px) scaleX(0.951);">Advanced Network Configuration</div>
<div class="t" style="left:401px;top:292px;color:#d9d9d9;transform:translate(0.96px,0.6px) scaleX(0.953);">Applets</div>
<div class="t" style="left:401px;top:336px;color:#d9d9d9;transform:translate(0.58px,0.6px) scaleX(0.921);">Backgrounds</div>
<div class="t" style="left:401px;top:380px;color:#d9d9d9;transform:translate(0.55px,0.6px) scaleX(0.948);">Backup Tool</div>
<div class="t" style="left:401px;top:424px;color:#d9d9d9;transform:translate(0.53px,0.6px) scaleX(0.96);">Balatro</div>
<div class="t" style="left:401px;top:468px;color:#d9d9d9;transform:translate(0.24px,0.6px) scaleX(0.958);">Bluetooth Manager</div>
<div class="t" style="left:401px;top:512px;color:#d9d9d9;transform:translate(0.6px,0.6px) scaleX(0.903);">Boxes</div>
<div class="t" style="left:402px;top:556px;color:#d9d9d9;transform:translate(0.3px,0.6px) scaleX(1);">Bulk Rename</div>
</div></div>
</div>
<div class="abs" id="fade"></div>
<div class="abs" id="panel"></div>
<div class="abs" id="pact"></div>
<div class="abs" id="psep"></div>
<div class="abs" id="rainbow"></div>
<svg class="abs" style="left:0;top:0" width="718" height="638" viewBox="0 0 718 638">
<svg x="0" y="578" width="60" height="60" viewBox="0 0 60 60"><circle cx="22.1" cy="32.1" r="15" fill="none" stroke="#fff" stroke-width="2.7"/><path d="M14.1 24.3 V34.6 Q14.1 38.1 17.6 38.1 H27.1 Q30.6 38.1 30.6 34.6 V30.3 Q30.6 27.3 27.6 27.3 Q24.7 27.3 24.7 30.3 V33.6 M24.7 30.3 Q24.7 27.3 21.9 27.3 Q19.3 27.3 19.3 30.3 V33.6" fill="none" stroke="#fff" stroke-width="2.5" stroke-linecap="butt" stroke-linejoin="round"/></svg>
<svg x="67.9" y="590.7" width="40.1" height="35.7" viewBox="0 0 40.1 35.7"><path d="M0 2.6 Q0 0 2.6 0 H13.4 Q14.5 0 15.3 0.8 L19 4.2 H37.5 Q40.1 4.2 40.1 6.8 V14 H0 Z" fill="#e4a94f"/><rect x="2" y="7" width="36.1" height="5" rx="1.4" fill="#e6e6ea"/><path d="M0 12.4 Q0 10.3 2.1 10.3 H38 Q40.1 10.3 40.1 12.4 V33.2 Q40.1 35.7 37.6 35.7 H2.5 Q0 35.7 0 33.2 Z" fill="#f8c56e"/><rect x="1" y="34.7" width="38.1" height="1" rx="0.5" fill="#e3a94f" opacity="0.6"/></svg>
<svg x="127.9" y="588.3" width="40.4" height="41" viewBox="0 0 41.4 41.4" preserveAspectRatio="none"><defs><linearGradient id="gp1" x1="0" y1="0" x2="0" y2="1"><stop offset="0" stop-color="#ff7c3a"/><stop offset="1" stop-color="#fa3862"/></linearGradient><mask id="mp1"><rect x="0" y="0" width="42" height="42" fill="#fff"/><circle cx="20.5" cy="22.9" r="6.1" fill="#000"/></mask></defs><rect x="0" y="0" width="41.4" height="41.4" rx="7.8" fill="url(#gp1)"/><g mask="url(#mp1)"><path d="M11.5 11.7 L13.2 13.7 L14.8 12.4 L16.8 15.6 Q19 14.6 20.6 13 Q23 10 24.6 6.8 Q26.6 9.6 29.4 11.4 Q31 12.6 31.7 14.6 L32.6 13.2 Q34.4 17 34.4 22 A14 14 0 0 1 6.4 22 Q6.4 16 11.5 11.7 Z" fill="#fff"/></g><path d="M15 17.8 Q19 16 22.9 18.2 Q21.6 19.2 21.2 20.8 Q19 19.4 16 20.2 Z" fill="#fff"/><path d="M17.1 14.9 Q21.4 13.4 25.6 17.1" fill="none" stroke="#f6566a" stroke-width="1" opacity="0.9"/></svg>
<svg x="187.9" y="588.3" width="40.4" height="41" viewBox="0 0 41.4 41.4" preserveAspectRatio="none"><defs><linearGradient id="gp2" x1="0" y1="0" x2="0" y2="1"><stop offset="0" stop-color="#353535"/><stop offset="1" stop-color="#1c1c1c"/></linearGradient></defs><rect x="0" y="0" width="41.4" height="41.4" rx="7.8" fill="url(#gp2)"/><rect x="0.4" y="0.4" width="40.6" height="40.6" rx="7.3999999999999995" fill="none" stroke="#4a4a4a" stroke-width="0.8" opacity="0.7"/><text x="5.4" y="18" font-family="Liberation Sans, sans-serif" font-weight="bold" font-size="13" fill="#f2f2f2">$</text><rect x="15.2" y="17.6" width="9.2" height="2.4" fill="#f4f4f4"/></svg>
<svg x="246.9" y="587.7" width="42.4" height="42.5" viewBox="0 0 42.4 42.5"><path d="M2.6 0 H39.8 Q42.4 0 42.4 2.6 V29.5 Q42.4 42.5 29.4 42.5 H2.6 Q0 42.5 0 39.9 V2.6 Q0 0 2.6 0 Z" fill="#e5e5e5"/><path d="M5.9 7.9 Q5.9 6.3 7.5 6.3 H12.6 Q14.1 6.3 14.1 7.8 V35 Q14.1 36.5 12.6 36.4 Q5.9 35.6 5.9 29.4 Z" fill="#ef4040"/><path d="M17.3 6.3 H37.1 Q37.1 14.3 29.1 14.3 H17.3 Q16.3 14.3 16.3 13.3 V7.3 Q16.3 6.3 17.3 6.3 Z" fill="#ef4040"/><path d="M17.2 16.9 L28.8 22.6 Q29.6 23 28.8 23.5 L17.2 29.2 Q16.5 29.5 16.5 28.7 V17.4 Q16.5 16.6 17.2 16.9 Z" fill="#16a0e2"/></svg>
<svg x="307.9" y="588.3" width="40.4" height="41" viewBox="0 0 41.4 41.4" preserveAspectRatio="none"><defs><linearGradient id="gp3" x1="0" y1="0" x2="0" y2="1"><stop offset="0" stop-color="#3acea2"/><stop offset="1" stop-color="#0cae7e"/></linearGradient></defs><rect x="0" y="0" width="41.4" height="41.4" rx="7.8" fill="url(#gp3)"/><g fill="none" stroke="#fff" stroke-width="2.9" stroke-linecap="round"><path d="M17.8 8.3 A10.1 10.1 0 0 1 27.9 18.4"/><path d="M32.9 18.2 A10.1 10.1 0 0 1 22.8 28.3"/><path d="M23.2 33.3 A10.1 10.1 0 0 1 13.1 23.2"/><path d="M7.9 23.3 A10.1 10.1 0 0 1 18 13.2"/></g></svg>
<svg x="367.9" y="588.3" width="40.4" height="41" viewBox="0 0 41.4 41.4" preserveAspectRatio="none"><defs><linearGradient id="gp4" x1="0" y1="0" x2="0" y2="1"><stop offset="0" stop-color="#4c7bc0"/><stop offset="1" stop-color="#23458a"/></linearGradient></defs><rect x="0" y="0" width="41.4" height="41.4" rx="7.8" fill="url(#gp4)"/><rect x="0.3" y="0.3" width="40.8" height="40.8" rx="7.5" fill="none" stroke="#14264c" stroke-width="0.6" opacity="0.5"/><rect x="6.3" y="11.9" width="28" height="19.8" rx="1.6" fill="#fff"/><rect x="18.2" y="7.5" width="12.3" height="2.6" rx="0.5" fill="#fff"/><circle cx="24.4" cy="21.8" r="5.4" fill="#fff" stroke="#2f589f" stroke-width="1.6"/><rect x="10.3" y="16" width="3.8" height="1.6" fill="#2f589f"/></svg>
<svg x="427.4" y="588.2" width="41.4" height="41.4" viewBox="0 0 41.4 41.4"><rect x="0.35" y="0.35" width="40.699999999999996" height="40.699999999999996" rx="7.5" fill="none" stroke="#2a1a3a" stroke-width="0.7" opacity="0.6"/><path d="M32.9 7.2 Q34.4 7 34.8 8.4 Q35 9.2 34.4 9.9 L22.6 23.6 L18.4 19.8 Z" fill="#fff"/><path d="M17.4 20.8 L21.4 24.6 Q21.6 31.6 13.6 33.2 Q10 33.8 6.8 33.6 Q11.6 30.6 12.2 26.8 Q13 22.2 17.4 20.8 Z" fill="#fff"/><path d="M15.2 24.4 Q14.6 28.2 10.6 31.6 Q15.4 29.4 15.2 24.4 Z" fill="#d22a8a"/></svg>
<svg x="487.9" y="588.3" width="40.4" height="41" viewBox="0 0 41.4 41.4" preserveAspectRatio="none"><defs><linearGradient id="gp6" x1="0" y1="0" x2="0" y2="1"><stop offset="0" stop-color="#6c6c6c"/><stop offset="1" stop-color="#383838"/></linearGradient></defs><rect x="0" y="0" width="41.4" height="41.4" rx="7.8" fill="url(#gp6)"/><rect x="0.35" y="0.35" width="40.699999999999996" height="40.699999999999996" rx="7.45" fill="none" stroke="#222" stroke-width="0.7" opacity="0.5"/><path d="M21.3 16.6 H28.9 L32.6 20.4 L28.9 24.5 H22.3 L12.1 31.7 L7.7 26.5 L15.5 20.1 Z" fill="#02e0e6"/><path d="M11.9 9.6 L7.7 15 L15.5 20.1 L21.3 16.6 Z" fill="#86dcdc"/></svg>
<svg x="547.9" y="588.3" width="40.4" height="41" viewBox="0 0 41.4 41.4" preserveAspectRatio="none"><defs><linearGradient id="gp7" x1="0" y1="0" x2="0" y2="1"><stop offset="0" stop-color="#f38e4a"/><stop offset="0.6" stop-color="#d83a62"/><stop offset="1" stop-color="#861876"/></linearGradient></defs><rect x="0" y="0" width="41.4" height="41.4" rx="7.8" fill="url(#gp7)"/><circle cx="29.1" cy="13.8" r="4.1" fill="#fff"/><path d="M7.4 32.6 V22.3 L13.8 16.6 L23.7 25.8 L28.1 22.3 L33.4 28.4 V32.6 Z" fill="#fff"/></svg>
<svg x="607.9" y="588.3" width="40.4" height="41" viewBox="0 0 41.4 41.4" preserveAspectRatio="none"><defs><linearGradient id="gp8" x1="0" y1="0" x2="0" y2="1"><stop offset="0" stop-color="#b7b4e3"/><stop offset="1" stop-color="#8e8ad0"/></linearGradient></defs><rect x="0" y="0" width="41.4" height="41.4" rx="7.8" fill="url(#gp8)"/><rect x="9.4" y="7.6" width="22" height="27.8" rx="0.8" fill="#6f69a8" opacity="0.45"/><rect x="9.4" y="7" width="22" height="27.8" rx="0.8" fill="#fff"/><g fill="#7a74b4"><rect x="12.4" y="12.9" width="16" height="1"/><rect x="12.4" y="15.9" width="16" height="1"/><rect x="12.4" y="18.9" width="16" height="1"/><rect x="12.4" y="21.9" width="11.8" height="1"/></g></svg>
<svg x="667.9" y="588.3" width="40.4" height="41" viewBox="0 0 41.4 41.4" preserveAspectRatio="none"><defs><linearGradient id="gp9" x1="0" y1="0" x2="0" y2="1"><stop offset="0" stop-color="#ea563e"/><stop offset="1" stop-color="#d83f2e"/></linearGradient></defs><rect x="0" y="0" width="41.4" height="41.4" rx="7.8" fill="url(#gp9)"/><path d="M15 9.4 Q16.4 12 20 13.2 Q25 14.4 29.6 12.4 Q33 10.6 34.4 7.4 Q35.6 14 34 20 Q32.6 25 29.6 27.4 Q24 30.6 18.6 27.6 Q13.6 25.4 8.6 23 Q5.6 21.4 6.4 18.6 Q7.6 16 10.6 17 Q12.6 17.8 13.4 20.4 Q14.4 14.6 15 9.4 Z" fill="#fff"/><circle cx="19.3" cy="18.1" r="2.7" fill="#e14a36"/><circle cx="26.2" cy="18.1" r="2.7" fill="#e14a36"/><circle cx="19.3" cy="18.1" r="1.15" fill="#fff"/><circle cx="26.2" cy="18.1" r="1.15" fill="#fff"/><path d="M18 24.4 Q22.4 27 26.4 22.8" stroke="#e14a36" stroke-width="1.2" fill="none"/><path d="M25.4 24.4 L31.4 31 Q33 33.4 34.6 33.8 Q34.4 31.8 32.6 30 L26.6 23.4 Z" fill="#fff" stroke="#dd4632" stroke-width="0.7"/></svg>
</svg>
</body></html>
